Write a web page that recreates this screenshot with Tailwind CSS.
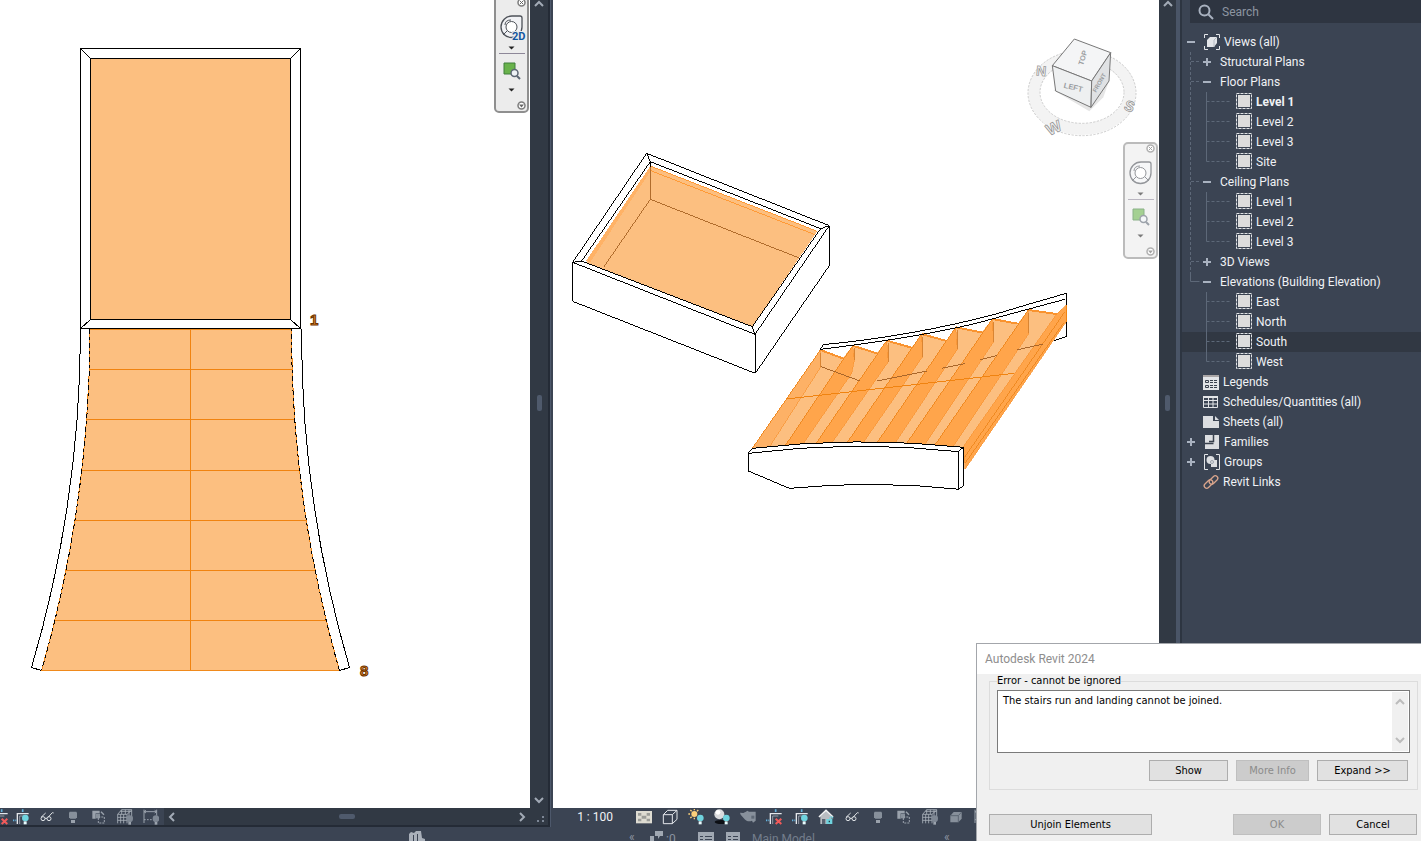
<!DOCTYPE html>
<html lang="en">

<head>
    <meta charset="UTF-8">
    <meta name="viewport" content="width=device-width, initial-scale=1.0">
    <script src="https://cdn.jsdelivr.net/npm/@tailwindcss/browser@4"></script>
    <title>Autodesk Revit 2024</title>
</head>

<body class="relative h-screen overflow-hidden bg-[#3b4453] font-[Roboto,sans-serif] text-[12px] text-[#f0f2f5]">

    <!-- Icon symbols -->
    <svg class="hidden">
        <symbol id="detail" viewBox="0 0 48 48">
            <rect x="0" y="6" width="48" height="37" fill="#dedcd2" />
            <path d="M6 12h10v8H6zM32 12h10v8H32zM17 20h14v9H17zM6 29h10v8H6zM32 29h10v8H32z" fill="#9b9c98" />
        </symbol>
        <symbol id="box" viewBox="0 0 48 48">
            <path d="M4 17h27v27H4zM4 17 17 4h28L31 17M45 4v27L31 44" fill="none" stroke="#e4e7eb" stroke-width="3" />
        </symbol>
        <symbol id="lamp" viewBox="0 0 48 48">
            <circle cx="37" cy="27" r="10" fill="#6fd3de" />
            <path d="M32 37h9v9h-9z" fill="#e8fbfd" />
        </symbol>
        <symbol id="sun" viewBox="0 0 48 48">
            <circle cx="19" cy="15" r="9" fill="#fbd07a" />
            <path d="M19-1v5M19 26v5M1 15h5M7 3l4 4M31 3l-4 4M7 27l4-4" stroke="#fbd07a" stroke-width="4" />
            <use href="#lamp" />
        </symbol>
        <symbol id="shadow" viewBox="0 0 48 48">
            <ellipse cx="22" cy="39" rx="20" ry="6" fill="#0c0f14" />
            <circle cx="16" cy="16" r="15" fill="#d9dbdd" />
            <circle cx="12" cy="10" r="7" fill="#fff" />
            <use href="#lamp" />
        </symbol>
        <symbol id="render" viewBox="0 0 48 48">
            <path d="M0 11l10 1 8-4 4-3 5 3h20v27l-8 6-3-6c-8 4-17 2-22-4L2 17z" fill="#87909b" />
            <path d="M34 20h9v9h-9z" fill="#5f6976" />
        </symbol>
        <symbol id="frame" viewBox="0 0 48 48">
            <path d="M13 45V14h34" fill="none" stroke="#e4e7eb" stroke-width="4" />
            <path d="M20 45V21h17" fill="none" stroke="#929aa5" stroke-width="3" />
            <path d="M29 1v8M0 34h4M7 34h3" stroke="#64b4df" stroke-width="5" />
        </symbol>
        <symbol id="crop-off" viewBox="0 0 48 48">
            <use href="#frame" />
            <path d="M29 29l17 16M46 29 29 45" stroke="#f05a5a" stroke-width="6" />
        </symbol>
        <symbol id="crop-on" viewBox="0 0 48 48">
            <use href="#frame" />
            <use href="#lamp" />
        </symbol>
        <symbol id="home" viewBox="0 0 48 48">
            <path d="M7 23 24 7l17 16v22H7z" fill="#b9bdc2" />
            <path d="M3 24 24 4l21 20" fill="none" stroke="#f2f3f4" stroke-width="5" />
            <path d="M12 30h10v15H12z" fill="#5a6370" />
            <path d="M25 30h18v15H25z" fill="#6fd3de" />
            <path d="M36 30v-6h8v5" fill="none" stroke="#6fd3de" stroke-width="3" />
            <path d="M32 35h4v5h-4z" fill="#26414a" />
        </symbol>
        <symbol id="glasses" viewBox="0 0 48 48">
            <path d="M6 25 20 12M27 25l13-14 4 1" fill="none" stroke="#dfe3e6" stroke-width="3" />
            <circle cx="12" cy="29" r="6" fill="none" stroke="#dfe3e6" stroke-width="3" />
            <circle cx="30" cy="29" r="6" fill="none" stroke="#dfe3e6" stroke-width="3" />
            <path d="M18 28h6" stroke="#dfe3e6" stroke-width="3" />
        </symbol>
        <symbol id="bulb" viewBox="0 0 48 48">
            <path d="M14 8h20l2 4v13l-4 4H16l-4-4V12z" fill="#87909b" />
            <path d="M18 33h12v9H18z" fill="#9aa2ac" />
        </symbol>
        <symbol id="displace" viewBox="0 0 48 48">
            <path d="M4 5h22v8H14v16H4z" fill="#9aa2ac" />
            <path d="M15 14h12v14H15z" fill="#87909b" />
            <path d="M30 8l9 9" stroke="#9aa2ac" stroke-width="4" />
            <path d="M22 24h18v18H22z" fill="none" stroke="#9aa2ac" stroke-width="3" stroke-dasharray="6 3" />
        </symbol>
        <symbol id="mesh" viewBox="0 0 48 48">
            <path d="M2 16 14 2h30v26M2 16h28v27M2 16v27M11 16v27M20 16v27M2 25h42M2 34h28M10 7h34M30 16 44 3M14 2v14M25 2v14M36 2v24" fill="none" stroke="#aab1ba" stroke-width="2.500" />
            <circle cx="38" cy="29" r="10" fill="#7f8894" />
            <path d="M34 39h8v8h-8z" fill="#9aa2ac" />
        </symbol>
        <symbol id="solid" viewBox="0 0 48 48">
            <path d="M7 20 17 9h24v20L31 40H7z" fill="#87909b" />
            <path d="M7 20h24v20M31 20 41 9" fill="none" stroke="#5d6774" stroke-width="3" />
        </symbol>
        <symbol id="reveal" viewBox="0 0 48 48">
            <path d="M3 2v40M3 8h38M41 2v18M9 4 3 8l6 4M35 4l6 4-6 4" fill="none" stroke="#9aa2ac" stroke-width="3" />
            <path d="M3 32h26" stroke="#9aa2ac" stroke-width="3" stroke-dasharray="5 4" />
            <circle cx="39" cy="29" r="10" fill="#7f8894" />
            <path d="M35 39h8v8h-8z" fill="#9aa2ac" />
        </symbol>

        <!-- Tree connectors and the view icon, one row high -->
        <symbol id="trunk" viewBox="0 0 70 20">
            <path d="M8.500 0v20" stroke="#5d6878" stroke-dasharray="3 2" />
        </symbol>
        <symbol id="leaf" viewBox="0 0 70 20">
            <path d="M24.500 9.500h25" stroke="#5d6878" stroke-dasharray="3 2" />
            <rect x="54.500" y="1.500" width="15" height="15" fill="none" stroke="#e3e5e8" stroke-dasharray="3 1" />
            <rect x="56" y="3" width="12" height="12" fill="#dcdcdc" />
        </symbol>
        <symbol id="tee" viewBox="0 0 70 20">
            <path d="M24.500 0v20" stroke="#5d6878" />
            <use href="#leaf" />
        </symbol>
        <symbol id="ell" viewBox="0 0 70 20">
            <path d="M24.500 0v9.500" stroke="#5d6878" />
            <use href="#leaf" />
        </symbol>
        <symbol id="plus" viewBox="0 0 10 10">
            <path d="M1 5h8M5 1v8" stroke="#a9b2c0" stroke-width="2" />
        </symbol>
        <symbol id="minus" viewBox="0 0 10 10">
            <path d="M1 5h8" stroke="#a9b2c0" stroke-width="2" />
        </symbol>
        <symbol id="twig" viewBox="0 0 16 20">
            <path d="M.5 0v20M1 9.500h8" stroke="#5d6878" stroke-dasharray="3 2" fill="none" />
        </symbol>
        <symbol id="twig-end" viewBox="0 0 16 20">
            <path d="M.5 0v9.500h9" stroke="#5d6878" fill="none" />
        </symbol>

        <!-- Navigation bar -->
        <symbol id="navbar" viewBox="0 0 35 117">
            <rect x="1" y="1" width="33" height="115" rx="4" fill="#ececec" stroke="#8f8f8f" stroke-width="2" />
            <circle cx="27.500" cy="6.500" r="3.500" fill="#fff" stroke="#7d7d7d" stroke-width="1.500" />
            <path d="M26 5l3 3M29 5l-3 3" stroke="#666" />
            <path d="M7 31a11 11 0 0 1 11-11h8q2 0 2 2v9a10.500 10.500 0 0 1-21 0z" fill="#f1f2f5" stroke="#4d5158" stroke-width="1.300" />
            <circle cx="17.500" cy="31" r="5.500" fill="#fff" stroke="#4d5158" />
            <path d="M13 35l-4 4M22 35l4 4M11 29q0-5 6-5" stroke="#4d5158" fill="none" />
            <path d="M14.500 50.500h6l-3 3z" fill="#222" />
            <path d="M5 57.500h26" stroke="#8d8798" />
            <path d="M10 67h11v11H10z" fill="#69b24b" stroke="#3f7f3a" />
            <circle cx="20.500" cy="77" r="3.500" fill="#eef2f6" stroke="#5c6673" stroke-width="1.500" />
            <path d="M23 80l3 3" stroke="#5c6673" stroke-width="2" />
            <path d="M14.500 92.500h6l-3 3z" fill="#222" />
            <circle cx="27.500" cy="109.500" r="3.500" fill="#fff" stroke="#7d7d7d" stroke-width="1.500" />
            <path d="M25 108.500h5l-2.500 3z" fill="#666" />
        </symbol>
    </svg>

    <div class="flex h-full flex-col">
        <div class="flex min-h-0 flex-1">

            <!-- Plan view -->
            <section class="flex min-w-0 flex-[553] border-r-2 border-[#3b4453]">
                <div class="flex min-w-0 flex-1 flex-col border-r border-[#4d586b]">
                    <div class="flex min-h-0 flex-1 border-r-2 border-[#242b36]">
                        <div class="relative min-w-0 flex-1 overflow-hidden bg-white">
                            <svg class="size-full" fill="none" stroke="#000" shape-rendering="crispEdges">
                                <path d="M80.500 48.500h220v280h-220z" />
                                <path d="M90.500 58.500h200v261h-200z" fill="#fcbf80" />
                                <path d="M80.500 48.500l10 10M300.500 48.500l-10 10M80.500 328.500l10-9M300.500 328.500l-10-9" />
                                <path d="M90 329A1235 1235 0 0 1 41.500 670.500H339.500A1235 1235 0 0 1 291.500 329z" fill="#fcbf80" stroke="#f08a1c" />
                                <path d="M190.500 329v341M90 369.500h202M87 419.500h208M81 470.500h219M75 520.500h232M66 570.500h250M54 620.500h273" stroke="#f08310" />
                                <path d="M90 329A1235 1235 0 0 1 41.500 670.500M339.500 670.500A1235 1235 0 0 1 291.500 329" stroke-dasharray="5 3 3 3" />
                                <path d="M80.500 329A1197 1197 0 0 1 31.500 667.500l10 3M301.500 329A1197 1197 0 0 0 349.500 667.500l-10 3M80 328.500h221" />
                                <g class="font-['Liberation_Sans',sans-serif] text-[15px] font-bold" fill="#e88a2a" stroke="#6b3200" stroke-width="1">
                                    <text x="310" y="325">1</text>
                                    <text x="360" y="676">8</text>
                                </g>
                            </svg>
                            <svg class="absolute -top-1 right-px h-[117px] w-[35px]">
                                <use href="#navbar" />
                                <text x="18" y="44" class="text-[11px] font-bold" fill="#14579f" stroke="#ececec" stroke-width="2" paint-order="stroke">2D</text>
                            </svg>
                        </div>
                        <div class="flex w-[18px] flex-col items-center justify-between bg-[#313944]">
                            <svg class="h-[10px] w-[10px]" fill="none" stroke="#a2aab6" stroke-width="2">
                                <path d="M1 6l4-4 4 4" />
                            </svg>
                            <span class="h-4 w-[5px] rounded-xs bg-[#4f5a6c]"></span>
                            <svg class="h-[13px] w-[10px]" fill="none" stroke="#a2aab6" stroke-width="2">
                                <path d="M1 3l4 4 4-4" />
                            </svg>
                        </div>
                    </div>
                    <div class="flex h-[19px] border-r-2 border-b-2 border-[#242b36] bg-[#3b4453]">
                        <div class="flex w-[8px] items-center justify-end overflow-hidden"><svg class="size-4 shrink-0"><use href="#crop-off" /></svg></div>
                        <div class="grid w-[156px] grid-cols-6 place-items-center">
                            <svg class="size-4"><use href="#crop-on" /></svg>
                            <svg class="size-4"><use href="#glasses" /></svg>
                            <svg class="size-4"><use href="#bulb" /></svg>
                            <svg class="size-4"><use href="#displace" /></svg>
                            <svg class="size-4"><use href="#mesh" /></svg>
                            <svg class="size-4"><use href="#reveal" /></svg>
                        </div>
                        <div class="flex flex-1 items-center justify-between bg-[#313944]">
                            <svg class="h-3 w-4" fill="none" stroke="#a2aab6" stroke-width="2">
                                <path d="M10 2 6 6l4 4" />
                            </svg>
                            <span class="h-[5px] w-4 rounded-xs bg-[#4f5a6c]"></span>
                            <svg class="h-3 w-4" fill="none" stroke="#a2aab6" stroke-width="2">
                                <path d="M6 2l4 4-4 4" />
                            </svg>
                        </div>
                        <svg class="h-full w-[18px] bg-[#313944]" fill="#7d8796">
                            <path d="M12 8h2v2h-2zM7 12h2v2H7zM12 12h2v2h-2z" />
                        </svg>
                    </div>
                </div>
            </section>

            <!-- 3D view -->
            <section class="flex min-w-0 flex-[629] border-r-2 border-[#2d3541]">
                <div class="flex min-w-0 flex-1 flex-col border-r-4 border-[#4a5567]">
                    <div class="flex min-h-0 flex-1">
                        <div class="relative min-w-0 flex-1 overflow-hidden bg-white">
                            <svg class="size-full" fill="none" stroke="#000" stroke-width="3" shape-rendering="crispEdges">
                                <!-- Landing -->
                                <g transform="translate(7 140) scale(.3333)">
                                    <path d="M271 78 772 274 577 560 80 368z" fill="#fcbf80" stroke="none" />
                                    <path d="M271 78 78 363l12 4L271 95z" fill="#ffb266" stroke="none" />
                                    <path d="M271 78 772 274M272 92l493 192" stroke="#ff9a36" />
                                    <path d="M271 78v100L718 354M271 178 132 380" stroke="#b06c2c" />
                                    <path d="M260 40 808 257 585 583 38 367z" />
                                    <path d="M271 65 782 266 577 560 65 363z" />
                                    <path d="M260 40l11 25M808 257l-26 9M585 583l-8-23M38 367l27-4M271 65v15" />
                                    <path d="M38 367v117l548 216V583M586 700 808 377V257" />
                                </g>
                                <!-- Stair run -->
                                <g transform="translate(182 280) scale(.3333)">
                                    <path d="M256 210 323 235 353 197 425 220 455 182 530 203 560 162 635 183 662 142 740 157 772 117 848 131 880 90 965 102 994 75V125L690 568 685 500 360 487 52 505z" fill="#fcbf80" stroke="none" />
                                    <g fill="#ffa54b" stroke="#f7922e" stroke-width="2">
                                        <path d="M256 210 258 260 104 500 52 505z" fill="#fdb166" />
                                        <path d="M353 197 358 240 350 280 203 494 150 498z" />
                                        <path d="M455 182 460 245 290 490 242 492z" />
                                        <path d="M560 162 563 230 385 488 335 490z" />
                                        <path d="M662 142 667 208 480 490 425 490z" />
                                        <path d="M772 117 776 185 570 493 515 490z" />
                                        <path d="M880 90 882 160 655 499 600 495z" />
                                        <path d="M994 75 965 102 685 500 690 568 994 125z" />
                                    </g>
                                    <path d="M256 210l67 25M353 197l72 23M455 182l75 21M560 162l75 21M662 142l78 15M772 117l76 14M880 90l85 12" stroke="#f9932f" stroke-width="6" />
                                    <path d="M256 210 52 505M353 197 150 498M455 182 242 492M560 162 335 490M662 142 425 490M772 117 515 490M880 90 600 495M990 95 690 530M985 130 690 550" stroke="#f08a22" />
                                    <path d="M155 357 838 280" stroke="#f08310" />
                                    <path d="M258 260l117 43M425 303l150-30M620 265l70-14M735 239l50-12M845 210l80-18" stroke="#a9662a" />
                                    <path d="M258 218v42M358 203v37M460 190v55M563 170v60M667 150v58M776 125v60M882 98v62" stroke="#d98432" />
                                    <path d="M256 208l9-14C430 178 600 150 780 103Q880 72 994 40V75M994 125v45l-36 12M256 208C400 190 560 168 720 131Q850 95 990 58" />
                                    <path d="M994 75v50" stroke="#f08310" />
                                    <path d="M40 520 52 505Q360 468 685 502V618L670 628Q420 600 163 625L40 573z" fill="#fff" />
                                    <path d="M40 520Q360 480 670 515L685 502M670 515V628" />
                                </g>
                            </svg>
                            <!-- View cube -->
                            <svg class="absolute top-9 right-5 h-[104px] w-[114px]" viewBox="45 48 342 312">
                                <g fill="none" stroke="#b5b5b5" stroke-width="2">
                                    <ellipse cx="216" cy="218" rx="144" ry="110" stroke="#f3f3f3" stroke-width="34" />
                                    <ellipse cx="216" cy="219" rx="162" ry="128" stroke-dasharray="7 4" />
                                    <ellipse cx="216" cy="217" rx="126" ry="93" stroke-dasharray="7 4" />
                                </g>
                                <path d="M130 210 238 274 280 232 297 183z" fill="#e6e6e6" />
                                <g stroke="#777" stroke-width="3">
                                    <path d="M127 137 193 57 302 98 245 183z" fill="#f4f5f6" />
                                    <path d="M127 137 245 183 243 262 137 213z" fill="#eef0f1" />
                                    <path d="M245 183 302 98 297 183 243 262z" fill="#e0e2e4" />
                                </g>
                                <g class="font-['Liberation_Sans',sans-serif] font-bold" fill="#9b9ea1">
                                    <text transform="translate(219 137) rotate(-72)" font-size="22">TOP</text>
                                    <text transform="translate(160 203) rotate(13)" font-size="23">LEFT</text>
                                    <text transform="translate(258 218) rotate(-60)" font-size="18">FRONT</text>
                                </g>
                                <g class="font-['Liberation_Sans',sans-serif] font-bold" fill="#f1f1f1" stroke="#8d8d8d" stroke-width="2">
                                    <text transform="translate(77 166) rotate(5)" font-size="42">N</text>
                                    <text transform="translate(118 348) rotate(-25)" font-size="48">W</text>
                                    <text transform="translate(340 268) rotate(20)" font-size="44">S</text>
                                </g>
                            </svg>
                            <svg class="absolute top-[142px] right-px h-[117px] w-[35px] opacity-60">
                                <use href="#navbar" />
                            </svg>
                        </div>
                        <div class="flex w-[17px] flex-col items-center justify-between bg-[#313944]">
                            <svg class="h-[10px] w-[10px]" fill="none" stroke="#a2aab6" stroke-width="2">
                                <path d="M1 6l4-4 4 4" />
                            </svg>
                            <span class="h-4 w-[5px] rounded-xs bg-[#4f5a6c]"></span>
                            <span class="h-[13px]"></span>
                        </div>
                    </div>
                    <div class="flex h-[19px] overflow-hidden bg-[#3b4453]">
                        <span class="w-[78px] shrink-0 pl-6 leading-[18px]">1 : 100</span>
                        <div class="grid h-[18px] w-[364px] shrink-0 grid-cols-14 place-items-center">
                            <svg class="size-4"><use href="#detail" /></svg>
                            <svg class="size-4"><use href="#box" /></svg>
                            <svg class="size-4"><use href="#sun" /></svg>
                            <svg class="size-4"><use href="#shadow" /></svg>
                            <svg class="size-4"><use href="#render" /></svg>
                            <svg class="size-4"><use href="#crop-off" /></svg>
                            <svg class="size-4"><use href="#crop-on" /></svg>
                            <svg class="size-4"><use href="#home" /></svg>
                            <svg class="size-4"><use href="#glasses" /></svg>
                            <svg class="size-4"><use href="#bulb" /></svg>
                            <svg class="size-4"><use href="#displace" /></svg>
                            <svg class="size-4"><use href="#mesh" /></svg>
                            <svg class="size-4"><use href="#solid" /></svg>
                            <svg class="size-4"><use href="#reveal" /></svg>
                        </div>
                    </div>
                </div>
            </section>

            <!-- Project browser -->
            <aside class="w-[239px] shrink-0">
                <label class="ml-2 flex h-[23px] items-center gap-2 bg-[#2e3541] pl-2">
                    <svg class="size-4 shrink-0" fill="none" stroke="#a9b2c0" stroke-width="2">
                        <circle cx="6.500" cy="6.500" r="5" />
                        <path d="M10.500 10.500 15 15" />
                    </svg>
                    <input type="text" placeholder="Search" aria-label="Search" class="min-w-0 flex-1 bg-transparent outline-none placeholder:text-[#8d95a1]">
                </label>
                <ul class="mt-[9px] whitespace-nowrap">
                    <li class="flex h-5 items-center pl-1">
                        <svg class="size-[10px]"><use href="#minus" /></svg>
                        <svg class="mr-1 ml-2 size-4" fill="none" stroke="#e3e5e8">
                            <path d="M4 .5H.5V4M12 .5h3.500V4M4 15.500H.5V12M12 15.500h3.500V12" />
                            <path d="M3 6l3-3h7v6l-3 4H3z" fill="#e3e5e8" stroke="none" />
                            <path d="M10 13V6l3-3" stroke="#b4bac2" />
                        </svg>
                        Views (all)
                    </li>
                    <li class="flex h-5 items-center pl-2">
                        <svg class="h-5 w-3"><use href="#twig" width="16" height="20" /></svg>
                        <svg class="mr-2 size-[10px]"><use href="#plus" /></svg>
                        Structural Plans
                    </li>
                    <li class="flex h-5 items-center pl-2">
                        <svg class="h-5 w-3"><use href="#twig" width="16" height="20" /></svg>
                        <svg class="mr-2 size-[10px]"><use href="#minus" /></svg>
                        Floor Plans
                    </li>
                    <li class="flex h-5 items-center font-bold">
                        <svg class="mr-1 h-5 w-[70px]"><use href="#trunk" /><use href="#tee" /></svg>
                        Level 1
                    </li>
                    <li class="flex h-5 items-center">
                        <svg class="mr-1 h-5 w-[70px]"><use href="#trunk" /><use href="#tee" /></svg>
                        Level 2
                    </li>
                    <li class="flex h-5 items-center">
                        <svg class="mr-1 h-5 w-[70px]"><use href="#trunk" /><use href="#tee" /></svg>
                        Level 3
                    </li>
                    <li class="flex h-5 items-center">
                        <svg class="mr-1 h-5 w-[70px]"><use href="#trunk" /><use href="#ell" /></svg>
                        Site
                    </li>
                    <li class="flex h-5 items-center pl-2">
                        <svg class="h-5 w-3"><use href="#twig" width="16" height="20" /></svg>
                        <svg class="mr-2 size-[10px]"><use href="#minus" /></svg>
                        Ceiling Plans
                    </li>
                    <li class="flex h-5 items-center">
                        <svg class="mr-1 h-5 w-[70px]"><use href="#trunk" /><use href="#tee" /></svg>
                        Level 1
                    </li>
                    <li class="flex h-5 items-center">
                        <svg class="mr-1 h-5 w-[70px]"><use href="#trunk" /><use href="#tee" /></svg>
                        Level 2
                    </li>
                    <li class="flex h-5 items-center">
                        <svg class="mr-1 h-5 w-[70px]"><use href="#trunk" /><use href="#ell" /></svg>
                        Level 3
                    </li>
                    <li class="flex h-5 items-center pl-2">
                        <svg class="h-5 w-3"><use href="#twig" width="16" height="20" /></svg>
                        <svg class="mr-2 size-[10px]"><use href="#plus" /></svg>
                        3D Views
                    </li>
                    <li class="flex h-5 items-center pl-2">
                        <svg class="h-5 w-3"><use href="#twig-end" width="16" height="20" /></svg>
                        <svg class="mr-2 size-[10px]"><use href="#minus" /></svg>
                        Elevations (Building Elevation)
                    </li>
                    <li class="flex h-5 items-center">
                        <svg class="mr-1 h-5 w-[70px]"><use href="#tee" /></svg>
                        East
                    </li>
                    <li class="flex h-5 items-center">
                        <svg class="mr-1 h-5 w-[70px]"><use href="#tee" /></svg>
                        North
                    </li>
                    <li class="flex h-5 items-center bg-[#313843]">
                        <svg class="mr-1 h-5 w-[70px]"><use href="#tee" /></svg>
                        South
                    </li>
                    <li class="flex h-5 items-center">
                        <svg class="mr-1 h-5 w-[70px]"><use href="#ell" /></svg>
                        West
                    </li>
                    <li class="flex h-5 items-center gap-1 pl-[21px]">
                        <svg class="size-4">
                            <path d="M0 1h16v15H0z" fill="#e3e5e8" />
                            <path d="M0 1h16v2H0z" fill="#aaa6a6" />
                            <path d="M2.500 6.500h3v2h-3zM2.500 11.500h3v2h-3zM7 6.500h3M11 6.500h3M7 8.500h3M11 8.500h3M7 11.500h3M11 11.500h3M7 13.500h3M11 13.500h3" fill="none" stroke="#39414d" />
                        </svg>
                        Legends
                    </li>
                    <li class="flex h-5 items-center gap-1 pl-[21px]">
                        <svg class="size-4" fill="none" stroke="#e3e5e8">
                            <path d="M.5 2.500h14v11H.5zM.5 6.500h14M.5 10h14M5.500 2.500v11M10 2.500v11" />
                            <path d="M0 3h15" stroke-width="2" />
                        </svg>
                        Schedules/Quantities (all)
                    </li>
                    <li class="flex h-5 items-center gap-1 pl-[21px]">
                        <svg class="size-4" fill="#dcdee1">
                            <path d="M0 2h10v5h6v7H0zM12 2l4 4h-4z" />
                        </svg>
                        Sheets (all)
                    </li>
                    <li class="flex h-5 items-center pl-1">
                        <svg class="size-[10px]"><use href="#plus" /></svg>
                        <svg class="mr-1 ml-2 size-4">
                            <path d="M1 1h14v14H1z" fill="#dcdee1" />
                            <path d="M1 9.500h8.500M9.500 1v6.500H5" fill="none" stroke="#39414d" stroke-width="1.500" />
                        </svg>
                        Families
                    </li>
                    <li class="flex h-5 items-center pl-1">
                        <svg class="size-[10px]"><use href="#plus" /></svg>
                        <svg class="mr-1 ml-2 size-4">
                            <path d="M4 .5H.5v15H4M12 .5h3.500v15H12" fill="none" stroke="#e3e5e8" />
                            <circle cx="6.500" cy="6" r="4" fill="#dcdee1" />
                            <path d="M7 6h6v7H7z" fill="#dcdee1" />
                            <circle cx="8" cy="8" r="1.500" fill="none" stroke="#9ba2ac" />
                        </svg>
                        Groups
                    </li>
                    <li class="flex h-5 items-center gap-1 pl-[21px]">
                        <svg class="size-4" fill="none" stroke="#d9a58c" stroke-width="1.300">
                            <rect x="-5" y="-2.500" width="10" height="5" rx="2.500" transform="translate(5.500 10) rotate(-45)" />
                            <rect x="-5" y="-2.500" width="10" height="5" rx="2.500" transform="translate(10.500 6) rotate(-45)" />
                        </svg>
                        Revit Links
                    </li>
                </ul>
            </aside>
        </div>

        <!-- Status bar -->
        <footer class="h-[14px] shrink-0 overflow-hidden text-[#8b94a1]">
            <div class="flex">
                <div class="min-w-0 flex-[553] pt-1">
                    <svg class="ml-[409px] h-5 w-5" fill="#a9b0ba">
                        <path d="M0 10V3l2-2 3 1 2-2 5 0 1 7 3 1v9H0z" />
                        <path d="M4.500 4v14M8.500 3v15" stroke="#3b4453" />
                    </svg>
                </div>
                <div class="flex min-w-0 flex-[868] pt-1">
                    <span class="w-[97px] pl-[76px] leading-3">«</span>
                    <svg class="h-5 w-4" fill="#a0a8b2">
                        <path d="M5 0h8v5h-3L8 8V5H5zM0 5h4v8H0z" />
                    </svg>
                    <span class="w-8 leading-4">:0</span>
                    <svg class="mr-3 size-4" fill="#a0a8b2">
                        <path d="M0 1h16v15H0z" />
                        <path d="M2 5.500h3M7 5.500h7M2 8.500h3M7 8.500h7" stroke="#3b4453" />
                    </svg>
                    <svg class="mr-[10px] size-4" fill="#a0a8b2">
                        <path d="M0 1h14v15H0z" />
                        <path d="M2 5.500h3M7 5.500h5M2 8.500h3M7 8.500h5" stroke="#3b4453" />
                    </svg>
                    <span class="w-48 leading-4 text-[#737d8b]">Main Model</span>
                    <span class="leading-3">«</span>
                </div>
            </div>
        </footer>
    </div>

    <!-- Error dialog -->
    <div role="dialog" aria-labelledby="dialogTitle" class="absolute right-0 bottom-0 w-[445px] border-t border-l border-[#a3a6ab] bg-[#f0f0f0] font-['DejaVu_Sans_Condensed','DejaVu_Sans',sans-serif] text-[11px] text-black">
        <h1 id="dialogTitle" class="h-[30px] bg-white pl-2 font-[Roboto,sans-serif] text-[12px] leading-[30px] text-[#8e8e8e]">Autodesk Revit 2024</h1>
        <fieldset class="mr-[3px] ml-3 border border-[#dcdcdc] px-[7px] pb-2">
            <legend class="px-0 leading-[14px]">Error - cannot be ignored</legend>
            <div class="mt-[2px] flex h-[63px] border border-[#7a7a7a] bg-white p-px">
                <textarea readonly aria-label="Error message" class="min-w-0 flex-1 resize-none overflow-hidden px-1 py-[2px] leading-[14px] outline-none">The stairs run and landing cannot be joined.</textarea>
                <div class="flex w-4 flex-col items-center justify-between bg-[#f0f0f0] py-1">
                    <svg class="h-3 w-[10px]" fill="none" stroke="#bcbcbc" stroke-width="2"><path d="M1 8l4-4 4 4" /></svg>
                    <svg class="h-3 w-[10px]" fill="none" stroke="#bcbcbc" stroke-width="2"><path d="M1 3l4 4 4-4" /></svg>
                </div>
            </div>
            <div class="mt-[7px] mr-[2px] flex justify-end gap-2">
                <button type="button" class="h-[21px] w-[79px] border border-[#adadad] bg-[#e1e1e1] pt-[2px]">Show</button>
                <button type="button" disabled class="h-[21px] w-[73px] border border-[#bfbfbf] bg-[#cccccc] pt-[2px] text-[#8b8b8b]">More Info</button>
                <button type="button" class="h-[21px] w-[91px] border border-[#adadad] bg-[#e1e1e1] pt-[2px]">Expand &gt;&gt;</button>
            </div>
        </fieldset>
        <div class="flex items-center gap-2 pt-6 pr-1 pb-[6px] pl-3">
            <button type="button" class="mr-auto h-[21px] w-[163px] border border-[#adadad] bg-[#e1e1e1] pt-[2px]">Unjoin Elements</button>
            <button type="button" disabled class="h-[21px] w-[88px] border border-[#bfbfbf] bg-[#cccccc] pt-[2px] text-[#8b8b8b]">OK</button>
            <button type="button" class="h-[21px] w-[88px] border border-[#adadad] bg-[#e1e1e1] pt-[2px]">Cancel</button>
        </div>
    </div>

</body>

</html>
